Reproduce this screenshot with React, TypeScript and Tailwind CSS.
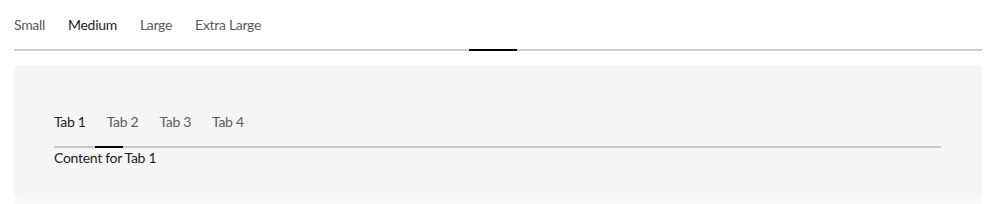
import React, { useState } from "react";

type TabsProps = {
  items: string[];
  selected: number;
  gap: string;
  indicatorLeft: string;
  indicatorWidth: string;
  onSelect: (i: number) => void;
};

const Tabs: React.FC<TabsProps> = ({ items, selected, gap, indicatorLeft, indicatorWidth, onSelect }) => {
  return (
    <div className="relative">
      <div className={`flex h-[49px] items-center ${gap}`}>
        {items.map((item, i) => (
          <button
            key={item}
            onClick={() => onSelect(i)}
            className={`text-[14px] leading-5 pt-[1px] tracking-[-0.3px] ${i === selected ? "text-[#1d1d1d]" : "text-[#5c5c5c]"}`}
          >
            {item}
          </button>
        ))}
      </div>
      <div className="h-[2px] bg-[#cbcbcb]" />
      <div
        className={`absolute bottom-0 h-[2px] bg-black ${indicatorLeft} ${indicatorWidth}`}
      />
    </div>
  );
};

export default function App() {
  const [size, setSize] = useState(1);
  const [tab, setTab] = useState(0);

  return (
    <div className="w-[997px] h-[204px] bg-white overflow-hidden font-['Lato',sans-serif]">
      <div className="ml-[14px] w-[968px]">
        <Tabs
          items={["Small", "Medium", "Large", "Extra Large"]}
          selected={size}
          gap="gap-[23px]"
          indicatorLeft="left-[455px]"
          indicatorWidth="w-[48px]"
          onSelect={setSize}
        />
        <div className="mt-[14px] h-[134px] bg-[#f5f5f5] rounded-[4px] pl-[40px] pr-[41px] pt-[32px]">
          <Tabs
            items={["Tab 1", "Tab 2", "Tab 3", "Tab 4"]}
            selected={tab}
            gap="gap-[21px]"
            indicatorLeft="left-[41px]"
            indicatorWidth="w-[28px]"
            onSelect={setTab}
          />
          <div className="text-[14px] leading-5 tracking-[-0.3px] text-[#1d1d1d]">Content for Tab {tab + 1}</div>
        </div>
        <div className="h-[10px] bg-[#fafafa] rounded-t-[4px]" />
      </div>
    </div>
  );
}
